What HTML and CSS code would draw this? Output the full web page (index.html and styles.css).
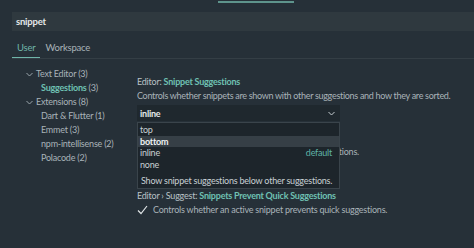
FILE: index.html
```html
<!DOCTYPE html>
<html>
<head>
<meta charset="utf-8">
<link rel="stylesheet" href="styles.css">
</head>
<body>
<div class="topbar"><div class="indicator"></div></div>
<div class="search">snippet</div>
<div class="tabs">
  <div class="tab active">User</div>
  <div class="tab">Workspace</div>
</div>
<div class="main">
  <ul class="tree">
    <li class="node"><span class="chev"><svg width="9" height="9" viewBox="0 0 9 9"><path d="M1.5 3 L4.5 6 L7.5 3" fill="none" stroke="#9aa5ab" stroke-width="1"/></svg></span>Text Editor (3)</li>
    <li class="leaf"><b class="hl">Suggestions</b> (3)</li>
    <li class="node"><span class="chev"><svg width="9" height="9" viewBox="0 0 9 9"><path d="M1.5 3 L4.5 6 L7.5 3" fill="none" stroke="#9aa5ab" stroke-width="1"/></svg></span>Extensions (8)</li>
    <li class="leaf">Dart &amp; Flutter (1)</li>
    <li class="leaf">Emmet (3)</li>
    <li class="leaf">npm-intellisense (2)</li>
    <li class="leaf">Polacode (2)</li>
  </ul>
  <div class="settings">
    <div class="setting">
      <div class="title">Editor: <span class="name">Snippet Suggestions</span></div>
      <div class="desc">Controls whether snippets are shown with other suggestions and how they are sorted.</div>
      <div class="select-wrap">
        <div class="select"><span>inline</span><svg width="9" height="9" viewBox="0 0 9 9"><path d="M1.5 3 L4.5 6 L7.5 3" fill="none" stroke="#c4ccd0" stroke-width="1"/></svg></div>
        <div class="dropdown">
          <div class="opt">top</div>
          <div class="opt sel">bottom</div>
          <div class="opt"><span>inline</span><span class="def">default</span></div>
          <div class="opt">none</div>
          <div class="optdesc">Show snippet suggestions below other suggestions.</div>
        </div>
      </div>
      <div class="hidden-line">Show snippet suggestions inline with other suggestions.</div>
    </div>
    <div class="setting second">
      <div class="title">Editor › Suggest: <span class="name">Snippets Prevent Quick Suggestions</span></div>
      <div class="check-row">
        <span class="check"><svg width="11" height="10" viewBox="0 0 11 10"><path d="M1 5.5 L4 8.5 L10 1" fill="none" stroke="#dfe4e6" stroke-width="1.2"/></svg></span>
        <span>Controls whether an active snippet prevents quick suggestions.</span>
      </div>
    </div>
  </div>
</div>
</body>
</html>
```
FILE: styles.css
```css
html, body {
  margin: 0;
  padding: 0;
}
body {
  width: 474px;
  height: 248px;
  overflow: hidden;
  background: #263038;
  font-family: Lato, "Open Sans", sans-serif;
  font-size: 9px;
  letter-spacing: -0.22px;
  color: #a9b3b8;
}
.topbar {
  height: 12px;
}
.indicator {
  margin-left: 218px;
  width: 76px;
  height: 2px;
  background: #5e948c;
  position: relative;
  top: 1px;
}
.search {
  margin-left: 12px;
  height: 19px;
  line-height: 19px;
  padding-left: 4px;
  background: #2f393f;
  color: #e4e8ea;
  font-weight: 700;
  font-size: 9.5px;
}
.tabs {
  display: flex;
  margin-left: 12px;
  height: 28px;
  box-sizing: border-box;
  border-bottom: 1px solid #343e45;
}
.tab {
  padding: 0 5px;
  line-height: 34px;
  height: 27px;
  color: #a9b3b8;
  font-size: 9.5px;
}
.tab.active {
  color: #6fb5a9;
  border-bottom: 1px solid #6fb5a9;
  height: 26px;
}
.main {
  display: flex;
}
.tree {
  list-style: none;
  margin: 8px 0 0 0;
  padding: 0;
  width: 137px;
  flex: none;
}
.tree li {
  height: 14px;
  line-height: 14px;
  white-space: nowrap;
}
.node {
  padding-left: 25px;
  display: flex;
  align-items: center;
}
.chev {
  width: 11px;
  display: inline-flex;
  align-items: center;
}
.leaf {
  padding-left: 41px;
}
.hl {
  color: #6fc1b3;
  font-weight: 700;
}
.settings {
  padding-top: 16px;
  flex: 1;
  min-width: 0;
}
.title {
  line-height: 14px;
  color: #b9c2c6;
  white-space: nowrap;
}
.name {
  color: #6fc1b3;
  font-weight: 700;
}
.desc {
  line-height: 14px;
  white-space: nowrap;
  letter-spacing: -0.3px;
}
.select-wrap {
  position: relative;
  margin-top: 2px;
  width: 203px;
}
.select {
  height: 16px;
  background: #1f282e;
  color: #e4e8ea;
  font-weight: 700;
  display: flex;
  align-items: center;
  justify-content: space-between;
  padding: 0 4px 0 3px;
}
.dropdown {
  position: absolute;
  top: 17px;
  left: 0;
  width: 203px;
  height: 67px;
  box-sizing: border-box;
  background: #1d252b;
  border: 1px solid #3a444b;
  padding-top: 1px;
  z-index: 2;
}
.opt {
  height: 11.5px;
  line-height: 11.5px;
  padding: 0 7px 0 2px;
  color: #c8d0d4;
  display: flex;
  justify-content: space-between;
}
.opt.sel {
  background: #363f46;
  color: #eef1f2;
  font-weight: 700;
}
.def {
  color: #5fb3a6;
}
.optdesc {
  margin-top: 4px;
  padding-left: 3px;
  line-height: 14px;
  color: #c8d0d4;
  white-space: nowrap;
}
.hidden-line {
  margin-top: 24px;
  width: 222px;
  text-align: right;
  line-height: 14px;
  white-space: nowrap;
}
.second {
  margin-top: 30px;
}
.check-row {
  display: flex;
  align-items: center;
  height: 14px;
  line-height: 14px;
  white-space: nowrap;
}
.check {
  width: 16px;
  display: inline-flex;
  align-items: center;
}
```
